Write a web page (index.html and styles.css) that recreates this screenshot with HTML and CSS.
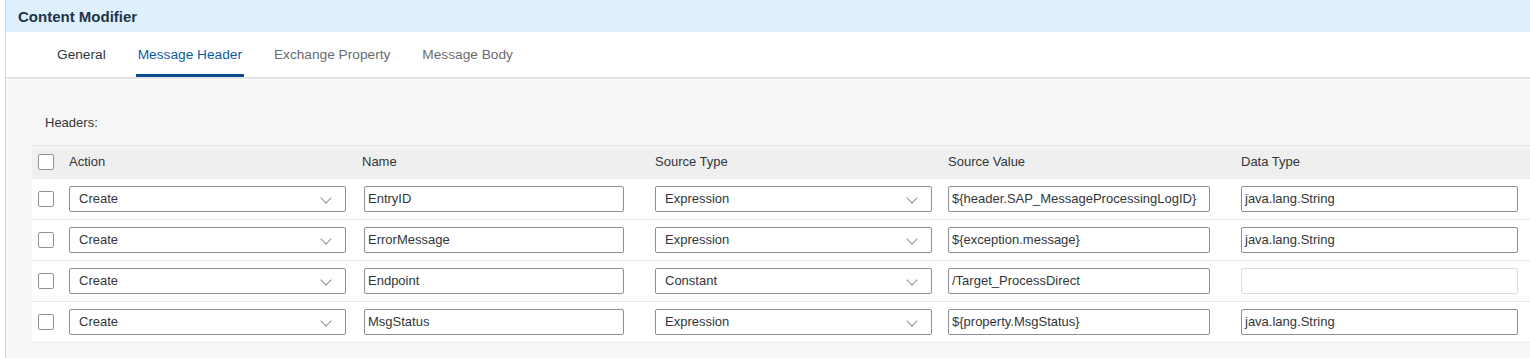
FILE: index.html
```html
<!DOCTYPE html>
<html>

<head>
    <title>Content Modifier</title>
    <meta name="viewport" content="width=device-width, initial-scale=1.0">
    <link rel="stylesheet" href="styles.css">
</head>

<body>
    <div class="panel">
        <div class="panel-title">Content Modifier</div>

        <div class="tabs">
            <span class="tab tab-dark">General</span>
            <span class="tab active">Message Header</span>
            <span class="tab">Exchange Property</span>
            <span class="tab">Message Body</span>
        </div>

        <div class="content">
            <div class="section-label">Headers:</div>

            <div class="table">
                <div class="row head-row">
                    <div class="cell check-cell"><span class="checkbox"></span></div>
                    <div class="cell">Action</div>
                    <div class="cell">Name</div>
                    <div class="cell">Source Type</div>
                    <div class="cell">Source Value</div>
                    <div class="cell">Data Type</div>
                </div>

                <div class="row">
                    <div class="cell check-cell"><span class="checkbox"></span></div>
                    <div class="cell"><div class="select">Create<span class="chevron"></span></div></div>
                    <div class="cell"><div class="field name-field">EntryID</div></div>
                    <div class="cell"><div class="select">Expression<span class="chevron"></span></div></div>
                    <div class="cell"><div class="field value-field">${header.SAP_MessageProcessingLogID}</div></div>
                    <div class="cell"><div class="field type-field">java.lang.String</div></div>
                </div>

                <div class="row">
                    <div class="cell check-cell"><span class="checkbox"></span></div>
                    <div class="cell"><div class="select">Create<span class="chevron"></span></div></div>
                    <div class="cell"><div class="field name-field">ErrorMessage</div></div>
                    <div class="cell"><div class="select">Expression<span class="chevron"></span></div></div>
                    <div class="cell"><div class="field value-field">${exception.message}</div></div>
                    <div class="cell"><div class="field type-field">java.lang.String</div></div>
                </div>

                <div class="row">
                    <div class="cell check-cell"><span class="checkbox"></span></div>
                    <div class="cell"><div class="select">Create<span class="chevron"></span></div></div>
                    <div class="cell"><div class="field name-field">Endpoint</div></div>
                    <div class="cell"><div class="select">Constant<span class="chevron"></span></div></div>
                    <div class="cell"><div class="field value-field">/Target_ProcessDirect</div></div>
                    <div class="cell"><div class="field type-field disabled"></div></div>
                </div>

                <div class="row">
                    <div class="cell check-cell"><span class="checkbox"></span></div>
                    <div class="cell"><div class="select">Create<span class="chevron"></span></div></div>
                    <div class="cell"><div class="field name-field">MsgStatus</div></div>
                    <div class="cell"><div class="select">Expression<span class="chevron"></span></div></div>
                    <div class="cell"><div class="field value-field">${property.MsgStatus}</div></div>
                    <div class="cell"><div class="field type-field">java.lang.String</div></div>
                </div>
            </div>
        </div>
    </div>
</body>
</html>
```

FILE: styles.css
```css
* {
    box-sizing: border-box;
}

body {
    margin: 0;
    background-color: #ffffff;
    font-family: "Liberation Sans", Arial, sans-serif;
    color: #32363a;
}

.panel {
    margin-left: 5px;
    border-left: 1px solid #d9d9d9;
    height: 100vh;
    display: flex;
    flex-direction: column;
}

.panel-title {
    background-color: #def0fe;
    height: 32px;
    line-height: 33px;
    padding-left: 12px;
    font-size: 15px;
    font-weight: bold;
    color: #223548;
}

.tabs {
    height: 47px;
    display: flex;
    gap: 28px;
    padding-left: 49px;
    background-color: #ffffff;
    border-bottom: 2px solid #e3e3e3;
}

.tab {
    display: flex;
    align-items: center;
    padding: 3px 2px 0 2px;
    font-size: 13.7px;
    color: #6a6d70;
    border-bottom: 3px solid transparent;
}

.tab-dark {
    color: #32363a;
}

.tab.active {
    color: #0a5ba8;
    border-bottom-color: #0b4a8c;
}

.content {
    flex: 1;
    background-color: #f7f7f7;
    border-top: 1px solid #ffffff;
    padding: 35px 0 0 26px;
}

.section-label {
    font-size: 13px;
    padding-left: 13px;
    height: 30px;
}

.table {
    border-top: 1px solid #e6e6e6;
}

.row {
    display: grid;
    grid-template-columns: 30px repeat(5, 293px) 1fr;
    height: 41px;
    background-color: #ffffff;
    border-bottom: 1px solid #e9e9e9;
    align-items: center;
}

.head-row {
    height: 33px;
    padding-bottom: 2px;
    background-color: #efefef;
    border-bottom: none;
    box-shadow: inset 0 4px 0 #f3f3f3;
}

.cell {
    padding-left: 7px;
    font-size: 13px;
}

.check-cell {
    padding-left: 6px;
    display: flex;
}

.checkbox {
    display: inline-block;
    width: 16px;
    height: 16px;
    background-color: #ffffff;
    border: 1px solid #8d9399;
    border-radius: 2px;
}

.select {
    position: relative;
    width: 277px;
    height: 26px;
    line-height: 24px;
    padding-left: 9px;
    background-color: #ffffff;
    border: 1px solid #8a9097;
    border-radius: 2px;
}

.chevron {
    position: absolute;
    right: 15px;
    top: 7px;
    width: 8px;
    height: 8px;
    border-right: 1px solid #8d9399;
    border-bottom: 1px solid #8d9399;
    transform: rotate(45deg);
}

.field {
    height: 26px;
    line-height: 24px;
    padding-left: 3px;
    background-color: #ffffff;
    border: 1px solid #8a9097;
    border-radius: 2px;
    white-space: nowrap;
    overflow: hidden;
}

.name-field {
    width: 260px;
    margin-left: 2px;
}

.value-field {
    width: 262px;
}

.type-field {
    width: 277px;
}

.field.disabled {
    border-color: #dcdde0;
    background-color: #ffffff;
}
```
